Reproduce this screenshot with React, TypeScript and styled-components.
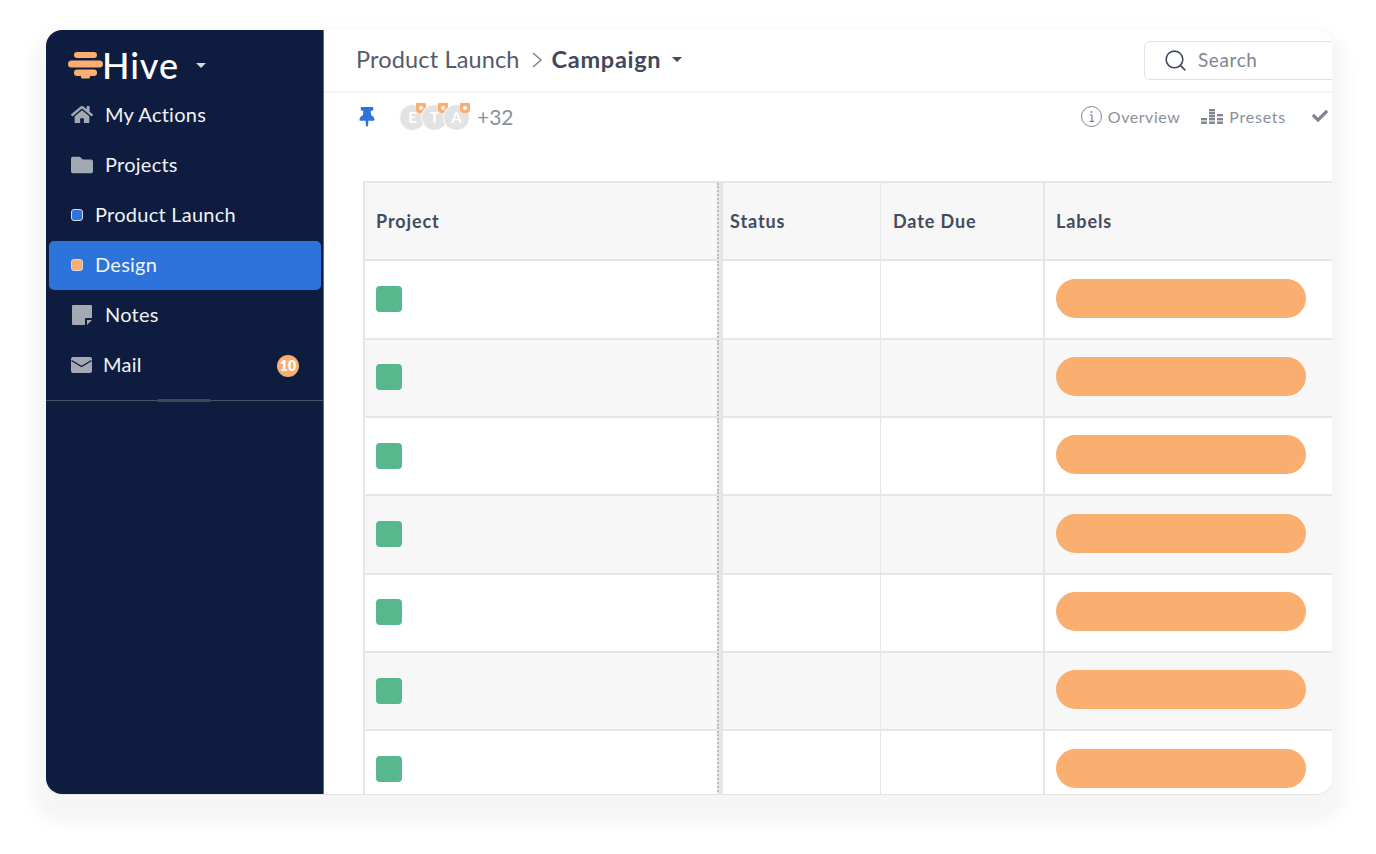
import { FaHome, FaFolder, FaThumbtack, FaCheck } from "react-icons/fa";
import { Search as SearchGlyph } from "lucide-react";
import styled, { createGlobalStyle } from "styled-components";

const GlobalStyle = createGlobalStyle`
  html, body {
    margin: 0;
    background: #fff;
    font-family: Lato, "Open Sans", sans-serif;
  }
`;

const Page = styled.div`
  width: 1376px;
  height: 854px;
  box-sizing: border-box;
  padding: 30px 44px 60px 46px;
  overflow: hidden;
`;
const AppWindow = styled.div`
  display: flex;
  height: 764px;
  border-radius: 16px;
  overflow: hidden;
  background: #fff;
  box-shadow: 0 1px 0 #e4e4e4, 0 15px 16px 14px rgba(0, 0, 0, 0.04);
`;

const Sidebar = styled.aside`
  width: 278px;
  flex: none;
  box-sizing: border-box;
  background: #0d1c3f;
  border-right: 1px solid #5d6884;
  padding-top: 15px;
  display: flex;
  flex-direction: column;
`;
const Brand = styled.div`
  height: 40px;
  padding-left: 22px;
  display: flex;
  align-items: center;
`;
const BrandName = styled.span`
  color: #fff;
  font-size: 36px;
  line-height: 40px;
  font-weight: 500;
  letter-spacing: 0.9px;
  margin-left: -2px;
`;
const BrandCaret = styled.span`
  width: 0;
  height: 0;
  margin-left: 17px;
  border-left: 5px solid transparent;
  border-right: 5px solid transparent;
  border-top: 5px solid #d8d9dd;
`;
const NavList = styled.nav`
  display: flex;
  flex-direction: column;
  padding-top: 6px;
`;
const NavItem = styled.div<{ $active?: boolean }>`
  height: 49px;
  box-sizing: border-box;
  margin: 0 2px 1px 3px;
  padding: 0 22px 2px;
  display: flex;
  align-items: center;
  border-radius: 5px;
  background: ${(p) => (p.$active ? "#2d73dc" : "transparent")};
  color: #f2f3f5;
  font-size: 20px;
  letter-spacing: 0.25px;
`;
const NavLabel = styled.span`
  margin-bottom: 2px;
`;
const NavIcon = styled.span<{ $gap?: number }>`
  width: 22px;
  height: 22px;
  margin-right: ${(p) => p.$gap ?? 12}px;
  flex: none;
  display: flex;
  align-items: center;
  justify-content: center;
  color: #a3a8b3;
`;
const ProjectDot = styled.span<{ $color: string }>`
  width: 12px;
  height: 12px;
  margin-right: 12px;
  flex: none;
  border-radius: 3px;
  box-sizing: border-box;
  background: ${(p) => p.$color};
  border: 1px solid #d8dbe2;
`;
const CountBadge = styled.span`
  margin-left: auto;
  margin-top: 2px;
  width: 22px;
  height: 22px;
  border-radius: 50%;
  background: #fbae70;
  color: #fff;
  font-size: 14px;
  font-weight: 800;
  display: flex;
  align-items: center;
  justify-content: center;
`;
const SideDivider = styled.div`
  margin-top: 9px;
  height: 1px;
  background: #4a5269;
  display: flex;
  justify-content: center;
  align-items: center;
`;
const DividerHandle = styled.span`
  width: 54px;
  height: 3px;
  margin-right: 1px;
  border-radius: 2px;
  background: #3e4659;
`;

const Main = styled.main`
  flex: 1;
  min-width: 0;
  display: flex;
  flex-direction: column;
`;
const TopBar = styled.header`
  height: 63px;
  flex: none;
  box-sizing: border-box;
  border-bottom: 2px solid #f5f5f5;
  padding-left: 32px;
  display: flex;
  align-items: center;
  color: #464f63;
`;
const Crumb = styled.span<{ $strong?: boolean }>`
  font-size: 23.5px;
  margin-bottom: 4px;
  font-weight: ${(p) => (p.$strong ? 700 : 400)};
  letter-spacing: ${(p) => (p.$strong ? 0.7 : 0.15)}px;
  color: ${(p) => (p.$strong ? "#3f485c" : "#535b6d")};
`;
const CrumbArrow = styled.svg`
  margin: -2px 0 0 3px;
`;
const CrumbCaret = styled.span`
  width: 0;
  height: 0;
  margin: -3px 0 0 11px;
  border-left: 5px solid transparent;
  border-right: 5px solid transparent;
  border-top: 5px solid #3f485c;
`;
const SearchBox = styled.div`
  margin-left: auto;
  width: 200px;
  height: 39px;
  margin-right: -12px;
  margin-top: -1px;
  flex: none;
  box-sizing: border-box;
  border: 1px solid #e2e2e2;
  border-radius: 6px;
  padding-left: 18px;
  display: flex;
  align-items: center;
  gap: 10px;
  color: #80858f;
  font-size: 19px;
  letter-spacing: 0.6px;
`;
const SearchLabel = styled.span`
  margin-bottom: 2px;
`;
const SubBar = styled.div`
  height: 48px;
  flex: none;
  box-sizing: border-box;
  padding-left: 33px;
  display: flex;
  align-items: center;
`;
const PinMark = styled.span`
  width: 20px;
  display: flex;
  justify-content: center;
  color: #2d73dc;
  margin-right: 22px;
`;
const AvatarStack = styled.div`
  display: flex;
`;
const Avatar = styled.span`
  position: relative;
  width: 27px;
  height: 27px;
  margin-right: -5px;
  border-radius: 50%;
  box-sizing: border-box;
  border: 1px solid #fff;
  background: #e3e3e3;
  color: #fff;
  font-size: 15px;
  font-weight: 700;
  display: flex;
  align-items: center;
  justify-content: center;
`;
const AvatarTag = styled.span`
  position: absolute;
  top: -2px;
  right: -1px;
  width: 10px;
  height: 10px;
  border-radius: 1px 1px 4px 4px;
  background: #fbae70;
  display: flex;
  align-items: center;
  justify-content: center;
  &::after {
    content: "";
    width: 4px;
    height: 4px;
    border-radius: 50%;
    background: #fff;
  }
`;
const ExtraCount = styled.span`
  margin: 0 0 2px 12px;
  color: #8b909b;
  font-size: 21px;
`;
const ViewTools = styled.div`
  margin-left: auto;
  margin-bottom: 2px;
  display: flex;
  align-items: center;
  color: #8b909b;
  font-size: 16px;
`;
const ViewTool = styled.span<{ $gap: number; $track?: number }>`
  display: flex;
  align-items: center;
  gap: 6px;
  margin-right: ${(p) => p.$gap}px;
  letter-spacing: ${(p) => p.$track ?? 0}px;
`;

const TableWrap = styled.div`
  margin: 40px 0 0 39px;
  width: 1000px;
  border-top: 2px solid #e6e6e6;
  border-left: 2px solid #e6e6e6;
`;
const GridRow = styled.div<{ $striped?: boolean; $height: number }>`
  display: grid;
  grid-template-columns: 352px 6px 158px 164px 1fr;
  height: ${(p) => p.$height}px;
  box-sizing: border-box;
  border-bottom: 2px solid #e6e6e6;
  background: ${(p) => (p.$striped ? "#f7f7f7" : "#fff")};
`;
const Cell = styled.div<{ $line?: number; $inset?: number }>`
  box-sizing: border-box;
  padding-left: ${(p) => p.$inset ?? 11}px;
  display: flex;
  align-items: center;
  border-right: ${(p) => p.$line ?? 0}px solid #e6e6e6;
  min-width: 0;
`;
const HeadLabel = styled.span`
  color: #424b5f;
  font-size: 18px;
  font-weight: 700;
  letter-spacing: 0.9px;
`;
const ColumnGrip = styled.div`
  background: #e6e6e6;
  border-left: 2px dotted #bdbdbd;
  box-sizing: border-box;
`;
const ProjectSwatch = styled.span`
  width: 26px;
  height: 26px;
  margin-bottom: 1px;
  border-radius: 4px;
  background: #57b88d;
`;
const LabelPill = styled.span`
  width: 250px;
  height: 39px;
  margin-bottom: 3px;
  border-radius: 20px;
  background: #faae6f;
`;

const HiveMark = () => (
  <svg width="36" height="28" viewBox="0 0 36 28">
    <rect x="6" y="1" width="23" height="6" rx="3" fill="#fbae70" />
    <rect x="0" y="9.5" width="35" height="7" rx="3.5" fill="#fbae70" />
    <path
      d="M9 18.5h17a3 3 0 0 1 3 3v.5a3 3 0 0 1-3 3h-4v1a1.5 1.5 0 0 1-1.5 1.5h-6A1.5 1.5 0 0 1 13 26v-1H9a3 3 0 0 1-3-3v-.5a3 3 0 0 1 3-3z"
      fill="#fbae70"
    />
  </svg>
);

const NoteIcon = () => (
  <svg width="20" height="20" viewBox="0 0 20 20">
    <path d="M1 0h18a1 1 0 0 1 1 1v12h-6a1 1 0 0 0-1 1v6H1a1 1 0 0 1-1-1V1a1 1 0 0 1 1-1z" fill="currentColor" />
    <path d="M15 15h5l-5 5z" fill="currentColor" />
  </svg>
);

const MailIcon = () => (
  <svg width="22" height="16" viewBox="0 0 22 16">
    <rect width="21" height="16" rx="2" fill="currentColor" />
    <path d="M0.5 3.5l10 6 10-6" fill="none" stroke="#0d1c3f" strokeWidth="1.4" />
  </svg>
);

const InfoIcon = () => (
  <svg width="21" height="21" viewBox="0 0 21 21" fill="none" stroke="#7f8490">
    <circle cx="10.5" cy="10.5" r="10" />
    <path d="M8.8 9h2.2v6.2M8.6 15.4h4.6" strokeWidth="1.2" />
    <circle cx="10.4" cy="6" r="1" fill="#7f8490" stroke="none" />
  </svg>
);

const PresetsIcon = () => (
  <svg width="22" height="15" viewBox="0 0 22 15" fill="#7f8490">
    {[
      [0, 9], [0, 12.5],
      [8, 0], [8, 3], [8, 6], [8, 9], [8, 12.5],
      [16, 5], [16, 9], [16, 12.5],
    ].map(([x, y]) => (
      <rect key={`${x}-${y}`} x={x} y={y} width="6" height="2.4" />
    ))}
  </svg>
);

const people = ["E", "T", "A"];
const rowCount = 7;

export default function App() {
  return (
    <Page>
      <GlobalStyle />
      <AppWindow>
        <Sidebar>
          <Brand>
            <HiveMark />
            <BrandName>Hive</BrandName>
            <BrandCaret />
          </Brand>
          <NavList>
            <NavItem>
              <NavIcon>
                <FaHome size={23} />
              </NavIcon>
              <NavLabel>My Actions</NavLabel>
            </NavItem>
            <NavItem>
              <NavIcon>
                <FaFolder size={22} />
              </NavIcon>
              <NavLabel>Projects</NavLabel>
            </NavItem>
            <NavItem>
              <ProjectDot $color="#2d73dc" />
              <NavLabel>Product Launch</NavLabel>
            </NavItem>
            <NavItem $active>
              <ProjectDot $color="#fbae70" />
              <NavLabel>Design</NavLabel>
            </NavItem>
            <NavItem>
              <NavIcon>
                <NoteIcon />
              </NavIcon>
              <NavLabel>Notes</NavLabel>
            </NavItem>
            <NavItem>
              <NavIcon $gap={10}>
                <MailIcon />
              </NavIcon>
              <NavLabel>Mail</NavLabel>
              <CountBadge>10</CountBadge>
            </NavItem>
          </NavList>
          <SideDivider>
            <DividerHandle />
          </SideDivider>
        </Sidebar>
        <Main>
          <TopBar>
            <Crumb>Product Launch</Crumb>
            <CrumbArrow width="29" height="18" viewBox="0 0 29 18" fill="none" stroke="#7c828f" strokeWidth="1.5">
              <path d="M10 2l8 7-8 7" />
            </CrumbArrow>
            <Crumb $strong>Campaign</Crumb>
            <CrumbCaret />
            <SearchBox>
              <SearchGlyph size={25} strokeWidth={1.5} color="#3f485c" />
              <SearchLabel>Search</SearchLabel>
            </SearchBox>
          </TopBar>
          <SubBar>
            <PinMark>
              <FaThumbtack size={20} />
            </PinMark>
            <AvatarStack>
              {people.map((initial) => (
                <Avatar key={initial}>
                  {initial}
                  <AvatarTag />
                </Avatar>
              ))}
            </AvatarStack>
            <ExtraCount>+32</ExtraCount>
            <ViewTools>
              <ViewTool $gap={21} $track={0.55}>
                <InfoIcon />
                Overview
              </ViewTool>
              <ViewTool $gap={26} $track={0.75}>
                <PresetsIcon />
                Presets
              </ViewTool>
              <ViewTool $gap={4}>
                <FaCheck size={16} color="#7f8490" />
              </ViewTool>
            </ViewTools>
          </SubBar>
          <TableWrap>
            <GridRow $striped $height={78.4}>
              <Cell>
                <HeadLabel>Project</HeadLabel>
              </Cell>
              <ColumnGrip />
              <Cell $line={1} $inset={7}>
                <HeadLabel>Status</HeadLabel>
              </Cell>
              <Cell $line={2} $inset={12}>
                <HeadLabel>Date Due</HeadLabel>
              </Cell>
              <Cell $inset={11}>
                <HeadLabel>Labels</HeadLabel>
              </Cell>
            </GridRow>
            {Array.from({ length: rowCount }, (_, i) => (
              <GridRow key={i} $striped={i % 2 === 1} $height={78.35}>
                <Cell>
                  <ProjectSwatch />
                </Cell>
                <ColumnGrip />
                <Cell $line={1} />
                <Cell $line={2} />
                <Cell>
                  <LabelPill />
                </Cell>
              </GridRow>
            ))}
          </TableWrap>
        </Main>
      </AppWindow>
    </Page>
  );
}
